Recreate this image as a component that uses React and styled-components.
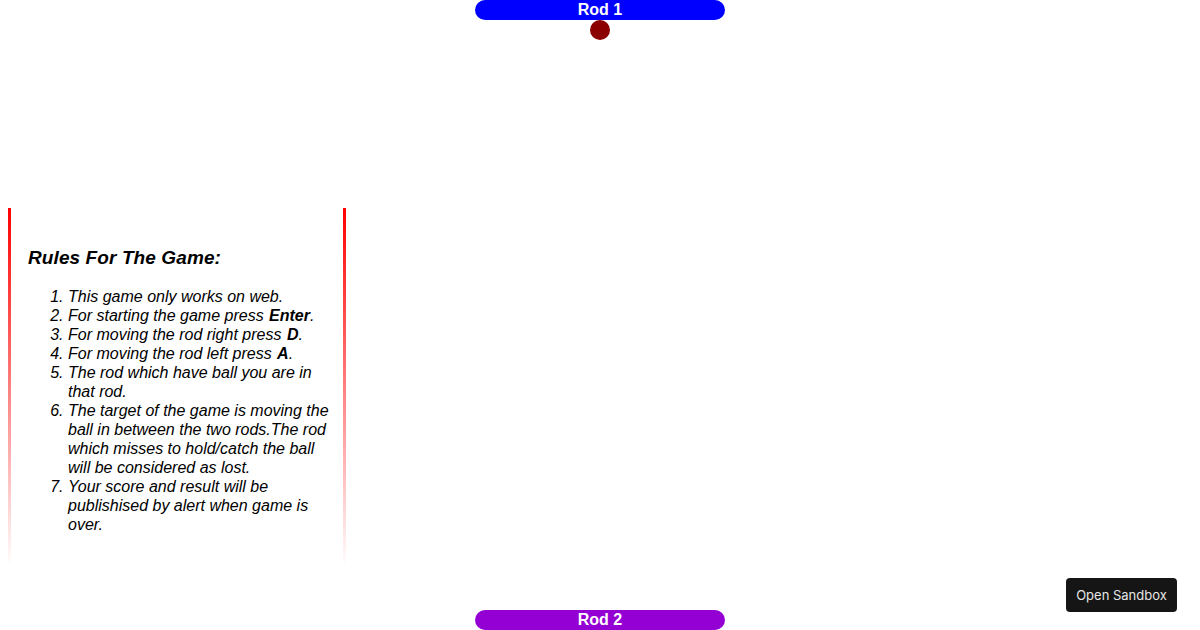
import React from "react";
import styled, { createGlobalStyle } from "styled-components";

const GlobalStyle = createGlobalStyle`
  html, body {
    margin: 0;
    padding: 0;
    background: #ffffff;
    font-family: "Liberation Sans", Arial, sans-serif;
  }
`;

// the playing field, rods and ball sit on it
const Arena = styled.div`
  position: relative;
  width: 100%;
  height: 630px;
  overflow: hidden;
  padding: 208px 8px 0;
  box-sizing: border-box;
`;

const Rod = styled.div`
  position: absolute;
  left: 50%;
  transform: translateX(-50%);
  ${(props) => (props.bottom ? "bottom: 0;" : "top: 0;")}
  width: 250px;
  height: 20px;
  border-radius: 10px;
  background: ${(props) => props.color};
  color: #ffffff;
  font-weight: bold;
  font-size: 16px;
  line-height: 20px;
  text-align: center;
`;

const Ball = styled.div`
  position: absolute;
  top: 20px;
  left: 590px;
  width: 20px;
  height: 20px;
  border-radius: 50%;
  background: #8b0000;
`;

const Rules = styled.div`
  width: 338px;
  box-sizing: border-box;
  padding: 20px 11px 16px 17px;
  border-left: 3px solid;
  border-right: 3px solid;
  border-top: 0;
  border-bottom: 0;
  border-image: linear-gradient(to bottom, #ff0000, rgba(255, 0, 0, 0)) 1;
  font-style: italic;
`;

const Heading = styled.h3`
  margin: 18.5px 0;
  font-size: 19px;
  font-weight: bold;
  letter-spacing: 0.1px;
`;

const List = styled.ol`
  margin: 16px 0;
  padding-left: 40px;
  font-size: 16px;
  line-height: 19px;
`;

const Key = styled.b`
  font-weight: bold;
  margin-left: 1px;
`;

const SandboxButton = styled.button`
  position: fixed;
  right: 23px;
  bottom: 18px;
  width: 111px;
  height: 34px;
  border: 0;
  border-radius: 4px;
  background: #151515;
  color: #e6e6e6;
  font-family: Inter, "Noto Sans", sans-serif;
  font-size: 13px;
  cursor: pointer;
`;

export default function App() {
  return (
    <>
      <GlobalStyle />
      <Arena>
        <Rod color="#0000ff">Rod 1</Rod>
        <Ball />
        <Rules>
          <Heading>Rules For The Game:</Heading>
          <List>
            <li>This game only works on web.</li>
            <li>
              For starting the game press <Key>Enter</Key>.
            </li>
            <li>
              For moving the rod right press <Key>D</Key>.
            </li>
            <li>
              For moving the rod left press <Key>A</Key>.
            </li>
            <li>The rod which have ball you are in that rod.</li>
            <li>
              The target of the game is moving the ball in between the two
              rods.The rod which misses to hold/catch the ball will be
              considered as lost.
            </li>
            <li>
              Your score and result will be publishised by alert when game is
              over.
            </li>
          </List>
        </Rules>
        <Rod color="#9400d3" bottom>
          Rod 2
        </Rod>
      </Arena>
      <SandboxButton>Open Sandbox</SandboxButton>
    </>
  );
}
